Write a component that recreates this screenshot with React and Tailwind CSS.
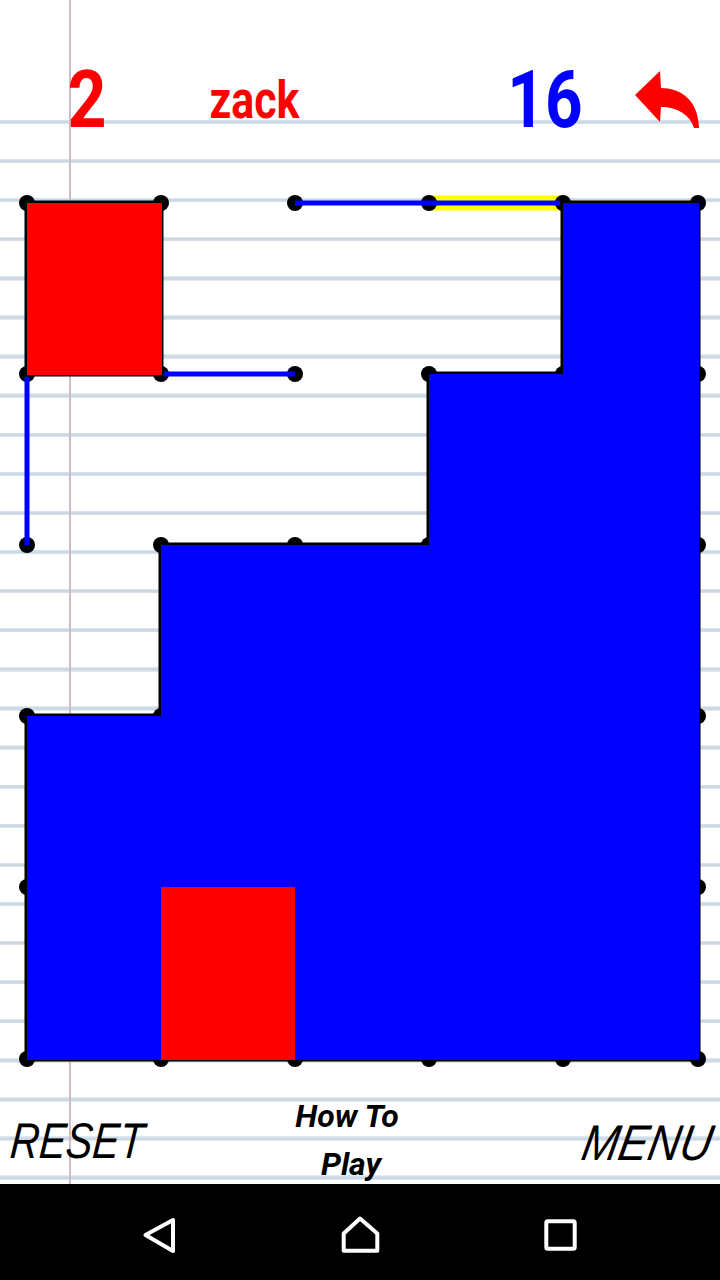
import React from "react";

const X = [27, 161, 295, 429, 563, 698];
const Y = [203, 374, 545, 716, 887, 1059];

// R = red player box, B = blue player box
const boxes = ["R...B", "...BB", ".BBBB", "BBBBB", "BRBBB"];

const blueLines = [
  [295, 203, 563, 203],
  [161, 374, 295, 374],
  [27, 374, 27, 545],
];

const lastMove = [429, 203, 563, 203];

const fillColor = { R: "#ff0000", B: "#0000ff" };

const Board = () => {
  const cells = [];
  const edges = [];
  boxes.forEach((row, r) => {
    row.split("").forEach((v, c) => {
      if (v === ".") return;
      cells.push({ r, c, v });
      edges.push([X[c], Y[r], X[c + 1], Y[r]]);
      edges.push([X[c], Y[r + 1], X[c + 1], Y[r + 1]]);
      edges.push([X[c], Y[r], X[c], Y[r + 1]]);
      edges.push([X[c + 1], Y[r], X[c + 1], Y[r + 1]]);
    });
  });

  return (
    <svg width="720" height="880" viewBox="0 190 720 880" className="block shrink-0">
      <line
        x1={lastMove[0] + 3}
        y1={lastMove[1]}
        x2={lastMove[2] - 3}
        y2={lastMove[3]}
        stroke="#ffff00"
        strokeWidth="15"
      />
      {Y.map((y) =>
        X.map((x) => <circle key={`${x}-${y}`} cx={x} cy={y} r="8" fill="#000" />)
      )}
      {blueLines.map((l, i) => (
        <line key={i} x1={l[0]} y1={l[1]} x2={l[2]} y2={l[3]} stroke="#0000ff" strokeWidth="5" />
      ))}
      {edges.map((l, i) => (
        <line
          key={i}
          x1={l[0]}
          y1={l[1]}
          x2={l[2]}
          y2={l[3]}
          stroke="#000"
          strokeWidth="5"
          strokeLinecap="square"
        />
      ))}
      {cells.map((cell) => (
        <rect
          key={`${cell.r}-${cell.c}`}
          x={X[cell.c]}
          y={Y[cell.r]}
          width={X[cell.c + 1] - X[cell.c] + 1}
          height={Y[cell.r + 1] - Y[cell.r] + 1}
          fill={fillColor[cell.v]}
          shapeRendering="crispEdges"
        />
      ))}
    </svg>
  );
};

const UndoArrow = () => (
  <svg width="66" height="58" viewBox="0 0 66 58" className="block">
    <path
      d="M0,24 L25,0 L26,17 C45,17 63,28 64,57 L59,57 C55,44 43,36 26,36 L25,51 Z"
      fill="#ff0000"
    />
  </svg>
);

const NavBar = () => (
  <div className="h-[96px] shrink-0 bg-black flex items-center pl-[136px] gap-[152px]">
    <svg width="48" height="48" viewBox="0 0 48 48">
      <path
        d="M9.5,27 L37,12 L37,43 Z"
        fill="none"
        stroke="#fff"
        strokeWidth="4"
        strokeLinejoin="round"
      />
    </svg>
    <svg width="48" height="48" viewBox="0 0 48 48">
      <path
        d="M24,10.5 L7.7,25.5 L7.7,42.7 L41.3,42.7 L41.3,25.5 Z"
        fill="none"
        stroke="#fff"
        strokeWidth="4"
        strokeLinejoin="round"
      />
    </svg>
    <svg width="48" height="48" viewBox="0 0 48 48">
      <rect
        x="10.3"
        y="13.3"
        width="28.4"
        height="27.4"
        rx="1.5"
        fill="none"
        stroke="#fff"
        strokeWidth="4"
      />
    </svg>
  </div>
);

export default function App() {
  return (
    <div className="w-[720px] h-[1280px] flex flex-col overflow-hidden">
      <div className="h-[1184px] shrink-0 overflow-hidden flex flex-col bg-white bg-[linear-gradient(to_right,transparent_69px,#cfbac7_69px,#cfbac7_71px,transparent_71px),linear-gradient(to_bottom,#fff_110px,transparent_110px),repeating-linear-gradient(to_bottom,transparent_0px,transparent_2.5px,#e4ebf2_2.5px,#ccd8e4_3.9px,#ccd8e4_5.5px,#e4ebf2_6.9px,transparent_6.9px,transparent_39.1px)]">
        {/* header: scores + player name + undo */}
        <div className="h-[190px] shrink-0 flex items-start font-['Roboto',sans-serif] font-bold">
          <div className="ml-[47px] w-[80px] mt-[60px] text-center">
            <span className="inline-block text-[80px] leading-none text-[#ff0000] scale-x-[0.85]">2</span>
          </div>
          <div className="ml-[48px] w-[160px] mt-[75px] text-center">
            <span className="inline-block text-[51px] leading-none text-[#ff0000] scale-x-[0.84]">zack</span>
          </div>
          <div className="ml-[160px] w-[100px] mt-[60px] text-center">
            <span className="inline-block text-[80px] leading-none text-[#0000ff] scale-x-[0.82]">16</span>
          </div>
          <div className="ml-[40px] mt-[71px]">
            <UndoArrow />
          </div>
        </div>

        <Board />

        {/* footer buttons */}
        <div className="flex-1 min-h-0 flex items-start text-black">
          <div className="w-[155px] shrink-0 mt-[46px] flex justify-center font-['Liberation_Sans',sans-serif]">
            <span className="inline-block shrink-0 text-[50px] leading-none italic scale-x-[0.8] -skew-x-6">RESET</span>
          </div>
          <div className="ml-[112px] w-[160px] shrink-0 mt-[22px] text-center font-['Roboto',sans-serif] font-bold italic text-[32px] leading-[48px]">
            <div className="inline-block">How To</div>
            <div>
              <span className="inline-block ml-[8px]">Play</span>
            </div>
          </div>
          <div className="ml-[151px] w-[140px] shrink-0 mt-[48px] flex justify-center font-['Liberation_Sans',sans-serif]">
            <span className="inline-block shrink-0 text-[50px] leading-none italic scale-x-[0.88] -skew-x-12">MENU</span>
          </div>
        </div>
      </div>
      <NavBar />
    </div>
  );
}
